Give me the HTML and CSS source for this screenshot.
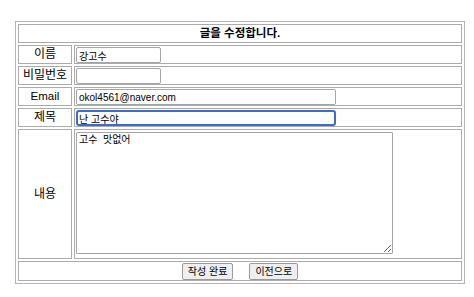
FILE: index.html
```html
<!DOCTYPE html>
<html lang="ko">
<head>
<meta charset="utf-8">
<title>글 수정</title>
<link rel="stylesheet" href="styles.css">
</head>
<body>
<form class="page">
  <table class="board">
    <tr>
      <td colspan="2" class="head">글을 수정합니다.</td>
    </tr>
    <tr>
      <td class="label">이름</td>
      <td class="field"><input class="short" type="text" value="강고수"></td>
    </tr>
    <tr>
      <td class="label">비밀번호</td>
      <td class="field"><input class="short" type="password" value=""></td>
    </tr>
    <tr>
      <td class="label latin">Email</td>
      <td class="field"><input class="long" type="text" value="okol4561@naver.com"></td>
    </tr>
    <tr>
      <td class="label">제목</td>
      <td class="field"><input class="long focus" type="text" value="난 고수야"></td>
    </tr>
    <tr>
      <td class="label tall">내용</td>
      <td class="field top"><textarea class="content">고수  맛없어</textarea></td>
    </tr>
    <tr>
      <td colspan="2" class="actions">
        <div class="btn-row">
          <button type="button" class="btn">작성 완료</button>
          <button type="button" class="btn">이전으로</button>
        </div>
      </td>
    </tr>
  </table>
</form>
</body>
</html>
```

FILE: styles.css
```css
html, body {
  margin: 0;
  padding: 0;
  background: #ffffff;
}

body {
  font-family: "Liberation Sans", "Noto Sans CJK KR", sans-serif;
  font-size: 11px;
  color: #111;
}

.page {
  padding: 21px 0 0 15px;
  margin: 0;
}

.board {
  width: 450px;
  border: 1px solid #b3b3b3;
  border-spacing: 2px;
  border-collapse: separate;
}

.board td {
  border: 1px solid #ababab;
  padding: 1px;
  height: 15px;
  line-height: 15px;
}

.head {
  text-align: center;
  font-weight: bold;
  font-size: 11.5px;
  color: #000;
}

.label {
  width: 50px;
  text-align: center;
  white-space: nowrap;
  font-size: 12px;
  color: #000;
}

.label.latin {
  font-size: 11.5px;
}

.board td.tall {
  height: 126px;
}

.board td.field {
  vertical-align: top;
  padding: 1px 1px 0 1px;
  height: 16px;
}

.board td.field.top {
  height: 127px;
}

input {
  box-sizing: border-box;
  display: block;
  height: 16px;
  margin: 0;
  padding: 0 2px;
  font-family: "Liberation Sans", "Noto Sans CJK KR", sans-serif;
  font-size: 10px;
  color: #000;
  border: 1px solid #a5a5a5;
  border-radius: 2px;
  background: #fff;
  outline: none;
}

.short {
  width: 85px;
}

.long {
  width: 260px;
}

.focus {
  border: 2px solid #3d6bc7;
  border-radius: 3px;
  padding: 0 1px;
}

.content {
  box-sizing: border-box;
  display: block;
  width: 317px;
  height: 122px;
  margin: 1px 0 0 0;
  padding: 1px 2px;
  font-family: "Liberation Sans", "Noto Sans CJK KR", sans-serif;
  font-size: 10px;
  line-height: 12px;
  color: #000;
  border: 1px solid #a5a5a5;
  border-radius: 1px;
  resize: both;
}

.board td.actions {
  height: 18px;
  padding: 0;
  line-height: 18px;
}

.btn-row {
  display: flex;
  justify-content: center;
  align-items: center;
  gap: 16px;
  height: 18px;
}

.btn {
  box-sizing: border-box;
  height: 17px;
  padding: 0 5px;
  margin: 0;
  font-family: "Liberation Sans", "Noto Sans CJK KR", sans-serif;
  font-size: 10px;
  line-height: 13px;
  color: #000;
  background: #efefef;
  border: 1px solid #9a9a9a;
  border-radius: 2px;
}
```
